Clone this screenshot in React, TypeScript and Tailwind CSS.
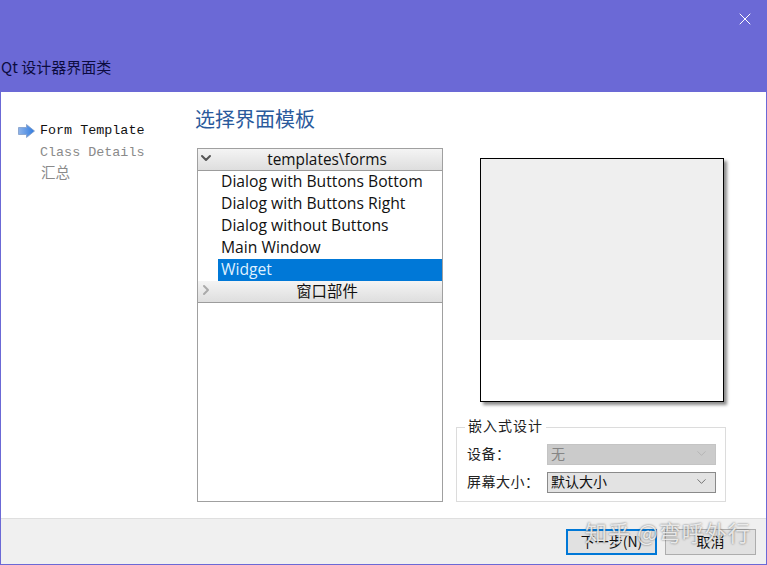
import { ChevronDown, ChevronRight, X } from 'lucide-react';

const TEMPLATES = [
  'Dialog with Buttons Bottom',
  'Dialog with Buttons Right',
  'Dialog without Buttons',
  'Main Window',
];

const CJK = "font-['Noto_Sans_CJK_SC',sans-serif]";
const UI = "font-['Open_Sans','Noto_Sans_CJK_SC',sans-serif]";

function ArrowIcon() {
  return (
    <svg width="17" height="14" viewBox="0 0 17 14" className="shrink-0">
      <defs>
        <linearGradient id="arrowFill" x1="0" y1="0" x2="1" y2="0">
          <stop offset="0" stopColor="#8fb4ea" />
          <stop offset="1" stopColor="#2f7be0" />
        </linearGradient>
      </defs>
      <path d="M0.5 3.5H8.5V0.5L16.5 7L8.5 13.5V10.5H0.5Z" fill="url(#arrowFill)" stroke="#7f9cc8" strokeWidth="0.8" />
    </svg>
  );
}

function SectionHeader({ label, open }: { label: string; open: boolean }) {
  return (
    <div className="relative h-[22px] flex items-center justify-center pl-[14px] bg-gradient-to-b from-[#f4f4f4] to-[#dedede] border-b border-[#9c9c9c] text-[15.4px] text-[#111]">
      <span className="absolute left-[0px] top-[1px]">
        {open ? (
          <ChevronDown size={16} strokeWidth={3} className="text-[#555]" />
        ) : (
          <ChevronRight size={16} strokeWidth={3} className="text-[#aaa]" />
        )}
      </span>
      {label}
    </div>
  );
}

function TemplateList() {
  return (
    <div className={`w-[246px] h-[354px] border border-[#a0a0a0] bg-white ${UI}`}>
      <SectionHeader label="templates\forms" open />
      {TEMPLATES.map((name) => (
        <div key={name} className="h-[22px] pl-[23px] leading-[20px] text-[15.7px] text-[#111]">
          {name}
        </div>
      ))}
      <div className="ml-[20px] h-[22px] pl-[3px] leading-[20px] text-[15.7px] text-[#dff0ff] bg-[#0078d7]">Widget</div>
      <SectionHeader label="窗口部件" open={false} />
    </div>
  );
}

function FakeSelect({ value, disabled }: { value: string; disabled?: boolean }) {
  return (
    <div
      className={`w-[169px] h-[21px] flex items-center justify-between pl-[3px] pr-[6px] pb-[1px] border text-[14px] ${
        disabled
          ? 'bg-[#cbcbcb] border-[#c4c4c4] text-[#858585]'
          : 'bg-[#e3e3e3] border-[#8a8a8a] text-[#111]'
      }`}
    >
      <span>{value}</span>
      <ChevronDown size={15} strokeWidth={1} className={disabled ? 'text-[#a8a8a8]' : 'text-[#333]'} />
    </div>
  );
}

function EmbeddedGroup() {
  return (
    <div className={`relative mt-[25px] w-[270px] h-[75px] border border-[#dcdcdc] pl-[10px] pt-[15px] ${CJK}`}>
      <span className="absolute left-[8px] top-[-12px] bg-white px-[3px] text-[14px] leading-[18px] tracking-[1px] text-[#222]">
        嵌入式设计
      </span>
      <div className="flex flex-col gap-[6px]">
        <div className="flex items-center">
          <span className="w-[80px] pb-[1px] text-[14px] tracking-[0.5px] text-[#222]">设备：</span>
          <FakeSelect value="无" disabled />
        </div>
        <div className="flex items-center">
          <span className="w-[80px] pb-[1px] text-[14px] tracking-[0.5px] text-[#222]">屏幕大小：</span>
          <FakeSelect value="默认大小" />
        </div>
      </div>
    </div>
  );
}

function Footer() {
  return (
    <div className={`relative h-[46px] bg-[#f0f0f0] border-t border-[#dfdfdf] flex justify-end items-start pt-[10px] pr-[10px] gap-[8px] text-[14px] text-[#111] ${CJK}`}>
      <button className="w-[91px] h-[26px] pb-[1px] bg-[#e1e1e1] border-2 border-[#0078d7] flex items-center justify-center">
        下一步(N)
      </button>
      <button className="w-[91px] h-[26px] pb-[1px] bg-[#e1e1e1] border border-[#adadad] flex items-center justify-center">
        取消
      </button>
      <span className="absolute left-[584px] top-[-4px] whitespace-nowrap text-[22px] tracking-[1px] text-white/80 [text-shadow:0_0_2px_rgba(40,40,40,0.75)]">
        知乎 @弯呼外行
      </span>
    </div>
  );
}

export default function App() {
  return (
    <div className="w-[767px] h-[565px] bg-[#6b69d6] flex flex-col overflow-hidden">
      <header className="relative h-[92px] shrink-0">
        <X size={20} strokeWidth={1.2} className="absolute right-[12px] top-[9px] text-white" />
        <div className={`absolute left-[1px] top-[57px] text-[15px] leading-[20px] text-[#0c0c40] ${CJK}`}>Qt 设计器界面类</div>
      </header>

      <div className="mx-[1px] mb-[1px] flex-1 flex flex-col bg-white">
        <div className="flex-1 flex">
          <nav className="w-[194px] shrink-0 pl-[17px] pt-[28px] font-['Liberation_Mono','Noto_Sans_CJK_SC',monospace] text-[13.4px] leading-[22px]">
            <div className="flex items-center gap-[5px] text-[#111]">
              <ArrowIcon />
              <span>Form Template</span>
            </div>
            <div className="pl-[22px] text-[#8a8a8a]">Class Details</div>
            <div className="pl-[23px] text-[14.5px] leading-[20px] text-[#8a8a8a]">汇总</div>
          </nav>

          <main className="flex-1 pt-[12px]">
            <h1 className={`text-[20px] leading-[30px] text-[#2a5a9c] ${CJK}`}>选择界面模板</h1>
            <div className="mt-[14px] ml-[2px] flex">
              <TemplateList />
              <div className="ml-[13px] pt-[10px]">
                <div className="ml-[24px] w-[244px] h-[244px] border border-black bg-white shadow-[3px_3px_3px_rgba(0,0,0,0.45)]">
                  <div className="h-[181px] bg-[#efefef]" />
                </div>
                <EmbeddedGroup />
              </div>
            </div>
          </main>
        </div>
        <Footer />
      </div>
    </div>
  );
}
